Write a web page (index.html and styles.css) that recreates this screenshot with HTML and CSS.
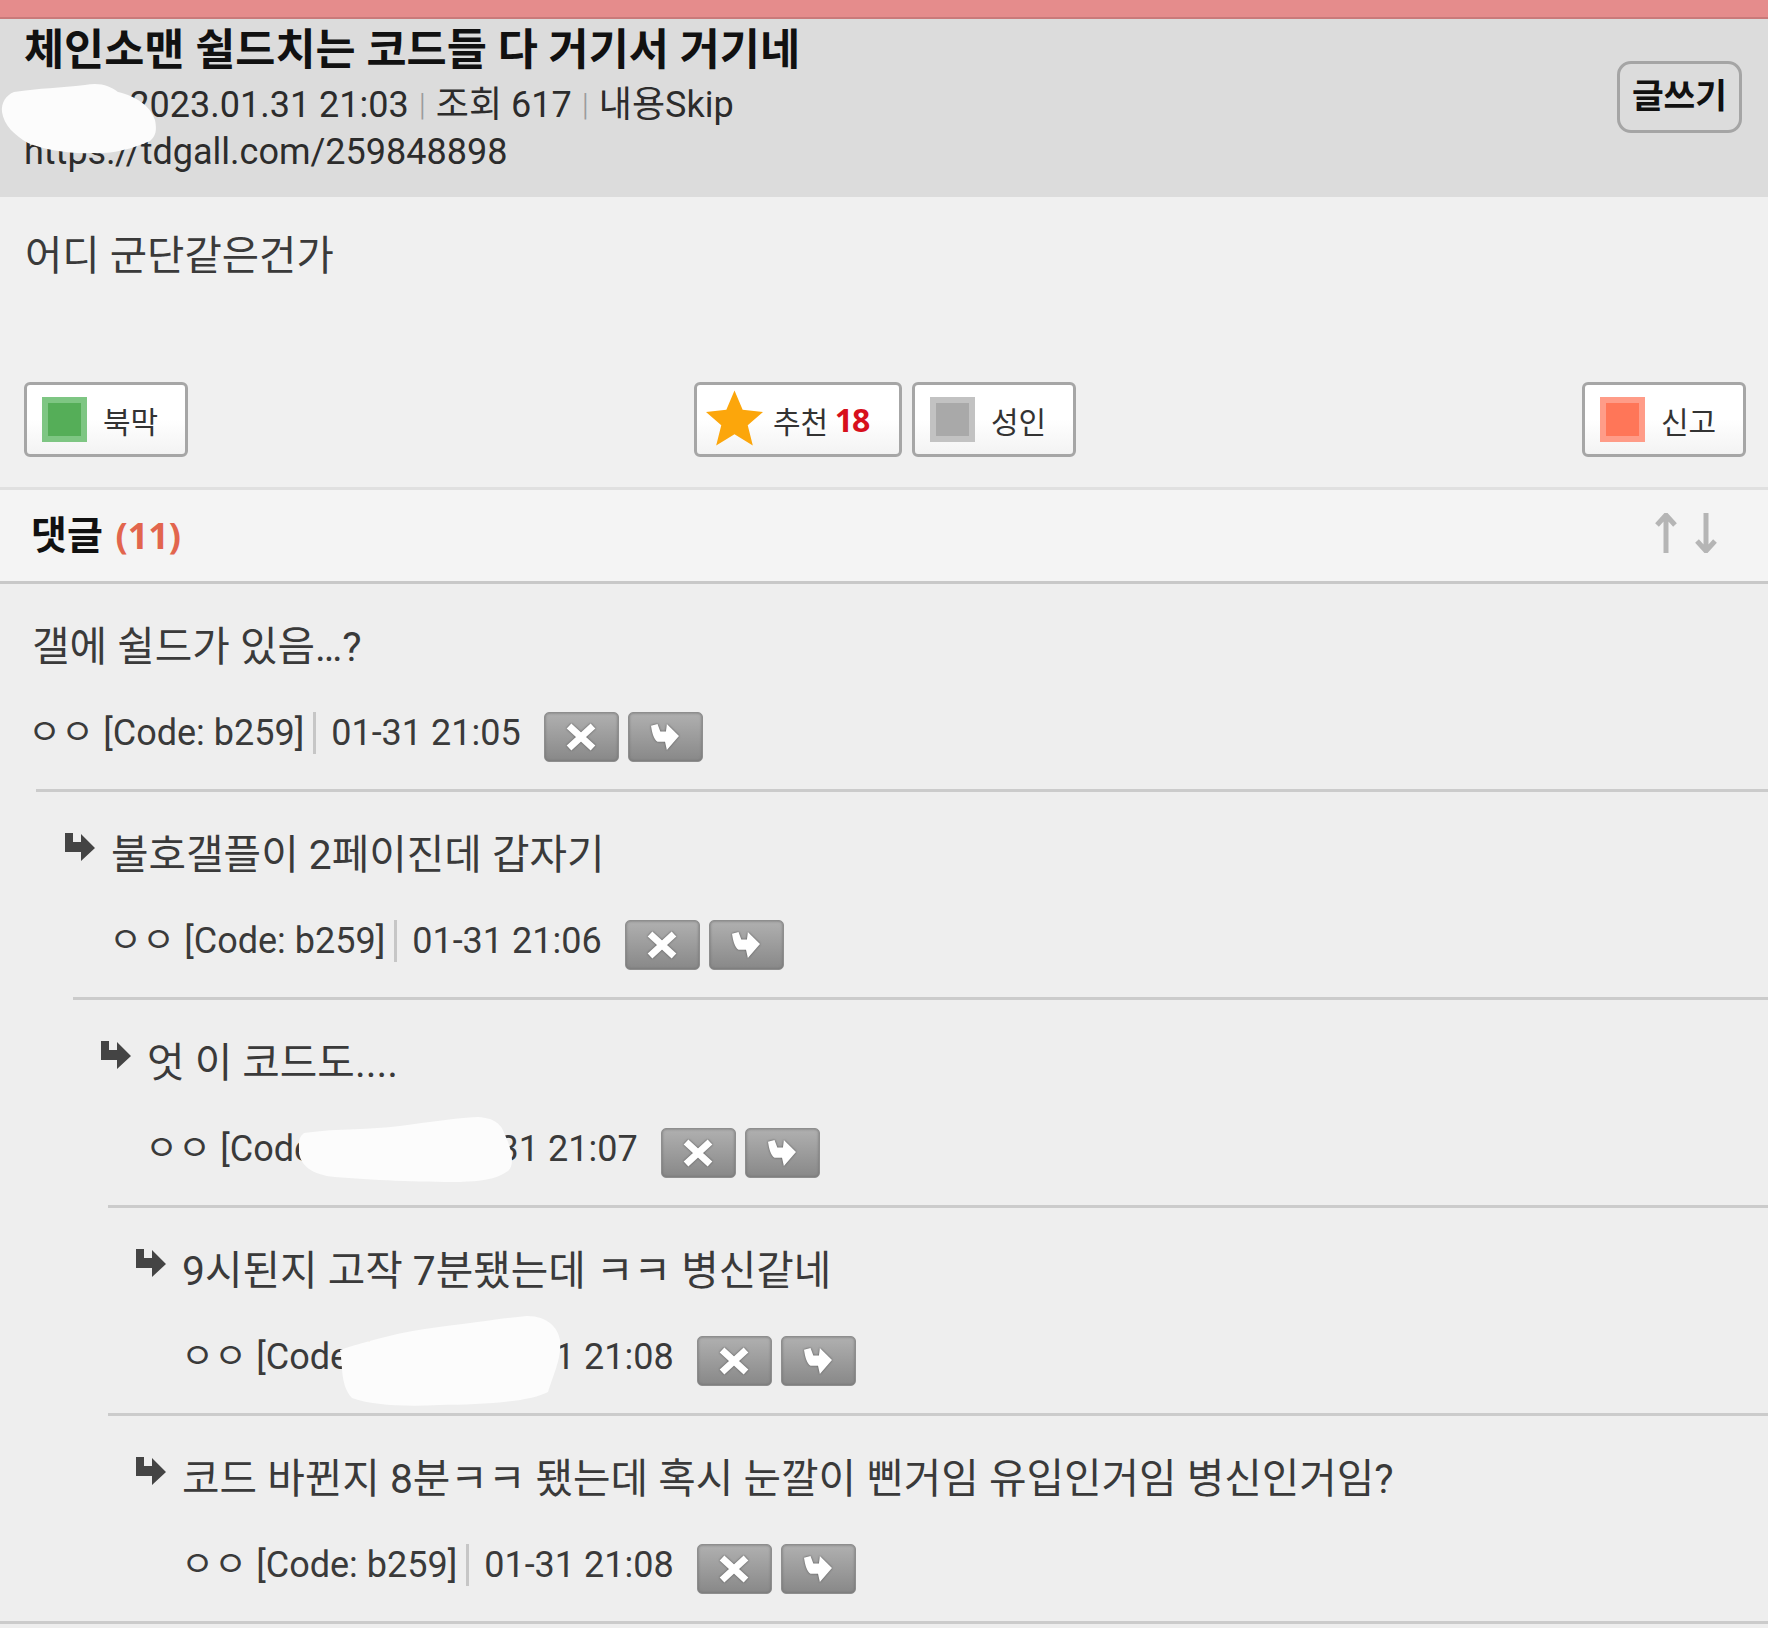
FILE: index.html
```html
<!DOCTYPE html>
<html lang="ko">
<head>
<meta charset="utf-8">
<title>체인소맨 쉴드치는 코드들 다 거기서 거기네</title>
<link rel="stylesheet" href="styles.css">
</head>
<body>
<svg width="0" height="0" class="defs">
  <defs>
    <symbol id="reply" viewBox="0 0 30 28"><path d="M0 0H8V9H16V1L30 15L16 28V19H0Z"/></symbol>
    <symbol id="reply-soft" viewBox="0 0 32 30"><path d="M1 3L8 1L11 9L17 9L18 1L31 14L18 29L16 20L8 20C4 18 2 10 1 3Z"/></symbol>
    <symbol id="cross" viewBox="0 0 30 28"><path d="M3 3L27 25M27 3L3 25" fill="none" stroke="currentColor" stroke-width="7"/></symbol>
  </defs>
</svg>
<div class="page">
  <div class="topbar"></div>
  <header class="post-head">
    <div class="post-info">
      <h1 class="title">체인소맨 쉴드치는 코드들 다 거기서 거기네</h1>
      <p class="meta"><span class="author">ㅇㅇ</span><span class="pipe">|</span>2023.01.31 21:03<span class="pipe">|</span>조회 617<span class="pipe">|</span>내용Skip</p>
      <p class="meta meta-url">https://tdgall.com/259848898</p>
    </div>
    <a class="write-btn">글쓰기</a>
  </header>
  <section class="post-body">
    <p class="post-text">어디 군단같은건가</p>
    <div class="actions">
      <div class="group"><button class="act"><span class="sq sq-green"></span>북막</button></div>
      <div class="group">
        <button class="act act-star">
          <svg class="star" viewBox="0 0 56 54"><path d="M28 0L36 19L56 21L41 34L46 54L28 43L10 54L15 34L0 21L20 19Z"/></svg>추천 <b class="count">18</b>
        </button>
        <button class="act"><span class="sq sq-grey"></span>성인</button>
      </div>
      <div class="group group-end"><button class="act"><span class="sq sq-red"></span>신고</button></div>
    </div>
  </section>
  <div class="reply-head">
    <h2 class="reply-title">댓글 <span class="reply-count">(11)</span></h2>
    <div class="sort">
      <svg class="arrow" viewBox="0 0 22 40"><path d="M11 2V40M2 12L11 2L20 12" fill="none" stroke="currentColor" stroke-width="5"/></svg>
      <svg class="arrow" viewBox="0 0 22 40"><path d="M11 0V38M2 28L11 38L20 28" fill="none" stroke="currentColor" stroke-width="5"/></svg>
    </div>
  </div>

  <article class="comment lv0">
    <p class="c-text">갤에 쉴드가 있음…?</p>
    <div class="c-meta"><span class="who">ㅇㅇ [Code: b259]</span><span class="date">01-31 21:05</span>
      <button class="tool"><svg class="ti"><use href="#cross"/></svg></button><button class="tool"><svg class="ti"><use href="#reply-soft"/></svg></button></div>
  </article>
  <hr class="rule rule1">
  <article class="comment lv1">
    <p class="c-text"><svg class="ri"><use href="#reply"/></svg>불호갤플이 2페이진데 갑자기</p>
    <div class="c-meta"><span class="who">ㅇㅇ [Code: b259]</span><span class="date">01-31 21:06</span>
      <button class="tool"><svg class="ti"><use href="#cross"/></svg></button><button class="tool"><svg class="ti"><use href="#reply-soft"/></svg></button></div>
  </article>
  <hr class="rule rule2">
  <article class="comment lv2">
    <p class="c-text"><svg class="ri"><use href="#reply"/></svg>엇 이 코드도....</p>
    <div class="c-meta"><span class="who">ㅇㅇ [Code: b259]</span><span class="date">01-31 21:07</span>
      <button class="tool"><svg class="ti"><use href="#cross"/></svg></button><button class="tool"><svg class="ti"><use href="#reply-soft"/></svg></button></div>
  </article>
  <hr class="rule rule3">
  <article class="comment lv3">
    <p class="c-text"><svg class="ri"><use href="#reply"/></svg>9시된지 고작 7분됐는데 ㅋㅋ 병신같네</p>
    <div class="c-meta"><span class="who">ㅇㅇ [Code: b259]</span><span class="date">01-31 21:08</span>
      <button class="tool"><svg class="ti"><use href="#cross"/></svg></button><button class="tool"><svg class="ti"><use href="#reply-soft"/></svg></button></div>
  </article>
  <hr class="rule rule3">
  <article class="comment lv3">
    <p class="c-text"><svg class="ri"><use href="#reply"/></svg>코드 바뀐지 8분ㅋㅋ 됐는데 혹시 눈깔이 삔거임 유입인거임 병신인거임?</p>
    <div class="c-meta"><span class="who">ㅇㅇ [Code: b259]</span><span class="date">01-31 21:08</span>
      <button class="tool"><svg class="ti"><use href="#cross"/></svg></button><button class="tool"><svg class="ti"><use href="#reply-soft"/></svg></button></div>
  </article>
  <hr class="rule">

  <svg class="redactions" viewBox="0 0 1768 1628">
    <path d="M14 92C40 88 60 88 85 85C100 82 110 86 118 92C135 96 150 105 155 120C157 130 156 136 150 141C130 150 110 154 92 153C70 154 45 150 28 143C14 135 4 125 2 112C1 103 6 95 14 92Z"/>
    <path d="M304 1133C340 1128 370 1130 400 1126C430 1122 455 1118 478 1117C495 1118 502 1125 505 1135C512 1150 515 1165 508 1171C495 1180 480 1181 460 1182C420 1182 370 1180 335 1177C312 1175 300 1165 299 1152C299 1142 298 1138 304 1133Z"/>
    <path d="M340 1350C370 1340 400 1332 439 1327C480 1322 505 1318 527 1316C548 1316 558 1328 560 1340C562 1358 553 1375 548 1392C530 1402 480 1405 439 1405C405 1407 370 1405 352 1398C340 1385 343 1365 340 1350Z"/>
  </svg>
</div>
</body>
</html>
```
FILE: styles.css
```css
* { box-sizing: border-box; }
html, body { margin: 0; padding: 0; }
body {
  background: #eeeeee;
  color: #333;
  font-family: Roboto, "Noto Sans CJK KR", sans-serif;
}
.defs { position: absolute; }
.page { position: relative; width: 1768px; height: 1628px; overflow: hidden; }

.topbar { height: 19px; background: #e58c8c; border-bottom: 2px solid #c97a7a; }

.post-head {
  display: flex;
  justify-content: space-between;
  align-items: flex-start;
  height: 178px;
  padding: 8px 26px 0 24px;
  background: #dcdcdc;
}
.title {
  margin: 0 0 8px;
  font-size: 43.6px;
  line-height: 48px;
  font-weight: 700;
  color: #111;
}
.meta { margin: 0; font-size: 36px; line-height: 45px; color: #2c2c2c; white-space: pre; }
.meta-url { margin-top: 1px; }
.author { margin-right: 12px; }
.pipe { margin: 0 10px; color: #9a9a9a; font-size: 32px; position: relative; top: -2px; font-weight: 300; }
.write-btn {
  width: 125px;
  height: 72px;
  margin-top: 34px;
  border: 3px solid #a5a5a5;
  border-radius: 14px;
  font-size: 34.5px;
  font-weight: 700;
  line-height: 64px;
  text-align: center;
  color: #111;
}

.post-body { background: #f0f0f0; height: 290px; padding-top: 35px; }
.post-text { margin: 0; height: 150px; padding-left: 25px; font-size: 40.6px; line-height: 48px; color: #3a3a3a; }
.actions {
  display: grid;
  grid-template-columns: 1fr auto 1fr;
  padding: 0 22px 0 24px;
}
.group { display: flex; gap: 10px; }
.group-end { justify-content: flex-end; }
.act {
  display: flex;
  align-items: center;
  height: 75px;
  width: 164px;
  padding: 0 0 0 15px;
  border: 3px solid #a6a6a6;
  border-radius: 6px;
  background: linear-gradient(#ffffff 50%, #f3f3f3);
  font: 400 30px Roboto, "Noto Sans CJK KR", sans-serif;
  color: #333;
  white-space: pre;
}
.act-star { width: 208px; padding-left: 9px; }
.star { width: 57px; height: 56px; margin: -3px 10px 0 0; fill: #fca60b; }
.count { color: #d7101c; font: 700 32px "Noto Sans", sans-serif; letter-spacing: -1px; margin-left: -1px; }
.sq { width: 45px; height: 45px; margin-right: 16px; border: 6px solid; flex: none; }
.sq-green { background: #55ae58; border-color: #7ec683; }
.sq-grey { background: #a9a9a9; border-color: #c2c2c2; }
.sq-red { background: #ff7658; border-color: #ff9c88; }

.reply-head {
  display: flex;
  justify-content: space-between;
  align-items: center;
  height: 97px;
  padding: 0 51px 0 31px;
  background: #f4f4f4;
  border-top: 3px solid #e0e0e0;
  border-bottom: 3px solid #c8c8c8;
}
.reply-title { margin: 0; font-size: 39px; line-height: 48px; font-weight: 700; color: #111; }
.reply-count { margin-left: 3px; color: #e2654d; font-family: "Noto Sans", sans-serif; font-size: 36px; }
.sort { display: flex; gap: 18px; margin-top: -6px; color: #b5b5b5; }
.arrow { width: 22px; height: 40px; }

.comment { height: 205px; padding-top: 33px; }
.lv0 { padding-left: 32px; }
.lv1 { padding-left: 65px; }
.lv2 { padding-left: 101px; }
.lv3 { padding-left: 136px; }
.c-text {
  display: flex;
  margin: 0;
  font-size: 40.8px;
  line-height: 60px;
  color: #3a3a3a;
  white-space: pre;
}
.ri {
  width: 30px;
  height: 28px;
  flex: none;
  margin: 8px 16px 0 0;
  fill: #444;
}
.c-meta {
  display: flex;
  align-items: flex-start;
  margin-top: 35px;
  margin-left: -4px;
  font-size: 36px;
  line-height: 42px;
  color: #3a3a3a;
}
.lv1 .c-meta, .lv2 .c-meta { padding-left: 48px; }
.lv3 .c-meta { padding-left: 49px; }
.who { padding-right: 9px; border-right: 3px solid #c6c6c6; margin-right: 15px; }
.date { margin-right: 23px; }
.tool {
  display: flex;
  align-items: center;
  justify-content: center;
  width: 75px;
  height: 50px;
  margin-right: 9px;
  padding: 0;
  border: 1px solid #8e8e8e;
  border-radius: 5px;
  background: linear-gradient(#b0b0b0, #888888);
  box-shadow: inset 0 0 3px #6f6f6f;
  color: #fff;
}
.ti { width: 30px; height: 28px; fill: #fff; filter: drop-shadow(0 0 1px #555) blur(0.5px); }

.rule { margin: 0; height: 3px; border: 0; background: #cbcbcb; }
.rule1 { margin-left: 36px; }
.rule2 { margin-left: 73px; }
.rule3 { margin-left: 108px; }

.redactions { position: absolute; inset: 0; width: 1768px; height: 1628px; fill: #fcfcfc; }
```
